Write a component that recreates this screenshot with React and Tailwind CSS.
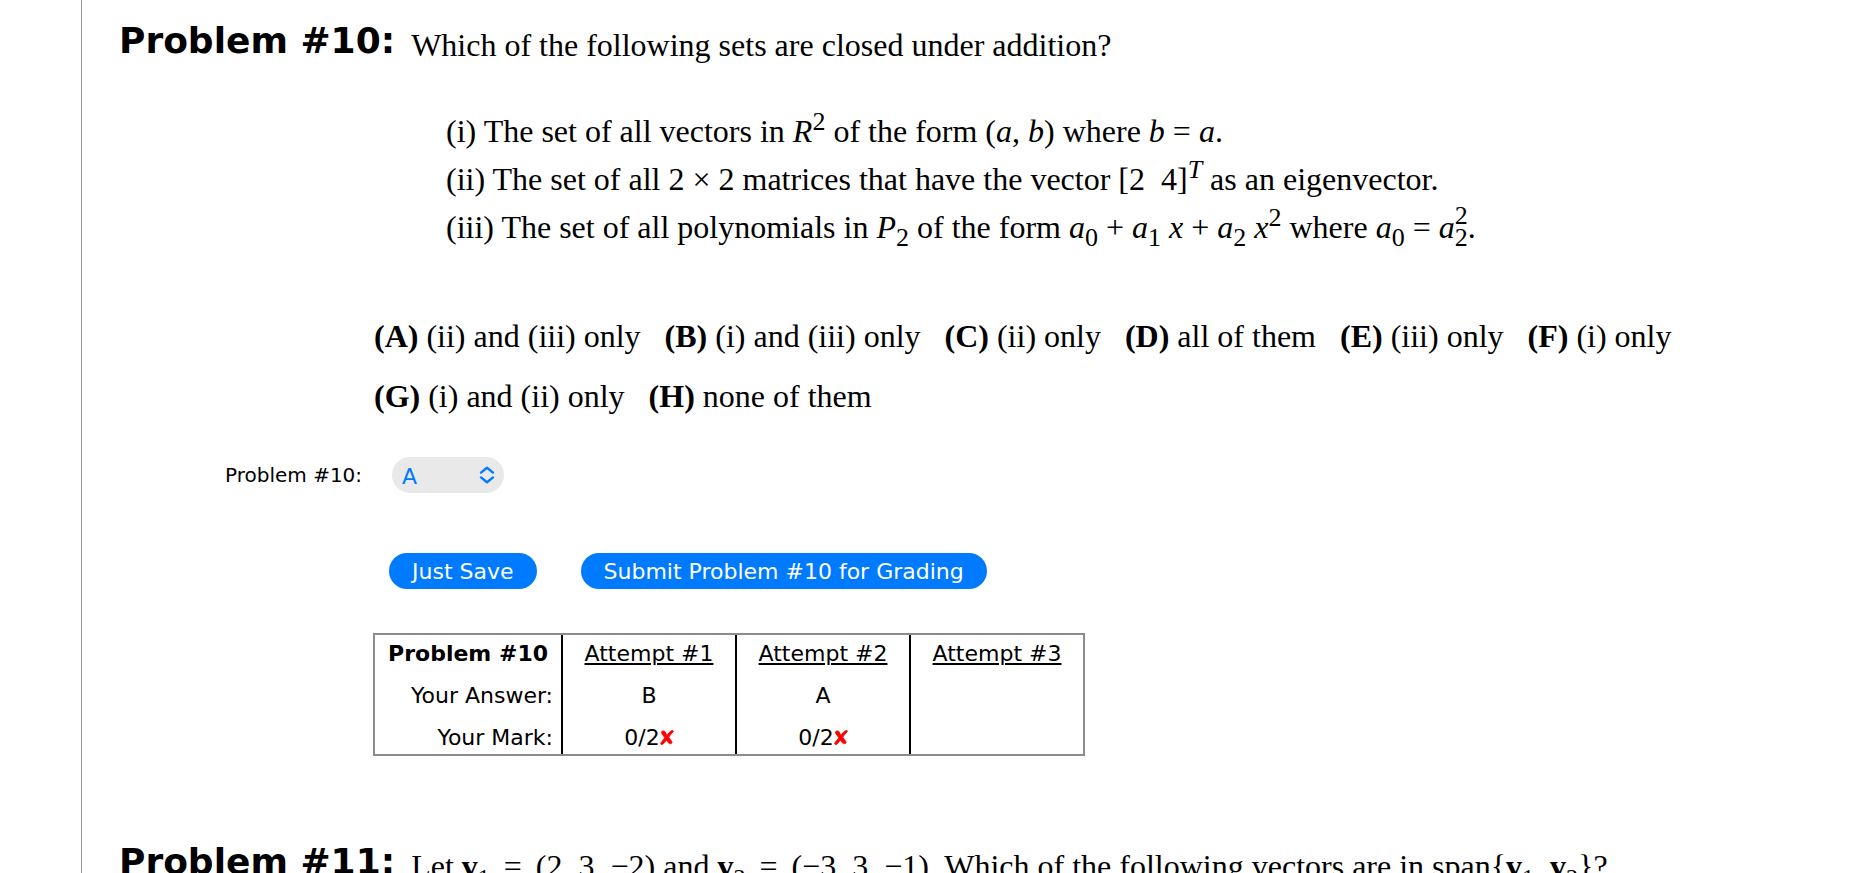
const options = [
  ['A', '(ii) and (iii) only'],
  ['B', '(i) and (iii) only'],
  ['C', '(ii) only'],
  ['D', 'all of them'],
  ['E', '(iii) only'],
  ['F', '(i) only'],
  ['G', '(i) and (ii) only'],
  ['H', 'none of them'],
];

const attempts = [
  { name: 'Attempt #1', answer: 'B', mark: '0/2' },
  { name: 'Attempt #2', answer: 'A', mark: '0/2' },
  { name: 'Attempt #3', answer: '', mark: '' },
];

const Sup = ({ children }) => (
  <sup className="relative -top-3 align-baseline text-[26px] leading-none">{children}</sup>
);

const Sub = ({ children }) => (
  <sub className="relative top-2 align-baseline text-[26px] leading-none">{children}</sub>
);

const Vector = ({ index }) => (
  <>
    <b>v</b>
    <sub className="relative top-2 align-baseline text-[24px] leading-none">{index}</sub>
  </>
);

const Equals = () => <span className="mx-[14px]">=</span>;

function ProblemHeading({ number, children }) {
  return (
    <div className="flex items-start gap-4">
      <h2 className="shrink-0 font-['DejaVu_Sans',sans-serif] text-[36px] leading-[48px] font-bold">
        Problem #{number}:
      </h2>
      <p className="leading-[56px]">{children}</p>
    </div>
  );
}

function Chevrons() {
  return (
    <svg
      className="pointer-events-none absolute top-[9px] right-[9px] h-[18px] w-4"
      viewBox="0 0 16 18"
      fill="none"
      stroke="#007aff"
      strokeWidth="2.4"
      strokeLinecap="round"
      strokeLinejoin="round"
      aria-hidden="true"
    >
      <path d="M2 6.6 8 1.8l6 4.8M2 11.4l6 4.8 6-4.8" />
    </svg>
  );
}

function Mark({ value }) {
  if (!value) return null;
  return (
    <>
      {value}
      <svg className="inline-block h-[15px] w-[14px] align-baseline" viewBox="0 0 14 15" aria-label="incorrect" role="img">
        <path
          fill="#f00"
          stroke="#f00"
          strokeWidth="0.8"
          d="M2.2 1.2C3.4.6 4.8.9 5.2 2L7 5.400C8.600 3 10.200 1 12 .6c1-.3 1.700.4 1.300 1.200C11.800 3.200 10 5 8.800 7.300l3 4.200c.5 1 .2 1.900-.8 2.100-1.200.4-2.200 0-2.700-1L6.500 10C5.400 11.400 4.300 12.900 3.200 14c-.9.800-2.400.7-2.600-.3 0-1 2.400-3.400 4.200-5.900L1.600 3.200C1.200 2.400 1.400 1.600 2.200 1.200Z"
        />
      </svg>
    </>
  );
}

export default function App() {
  return (
    <main className="h-screen overflow-hidden bg-white pl-[81px] font-['Liberation_Serif',serif] text-[32px] text-black">
      <div className="min-h-full border-l border-[#999] pt-[17px] pl-[37px]">
        <section className="h-[821px]">
          <ProblemHeading number="10">
            Which of the following sets are closed under addition?
          </ProblemHeading>

          <div className="mt-[34px] pl-[327px] leading-[48px]">
            <p>
              (i) The set of all vectors in <i>R</i>
              <Sup>2</Sup> of the form (<i>a</i>, <i>b</i>) where <i>b</i> = <i>a</i>.
            </p>
            <p>
              (ii) The set of all 2 × 2 matrices that have the vector [2&nbsp; 4]
              <Sup>
                <i>T</i>
              </Sup>{' '}
              as an eigenvector.
            </p>
            <p>
              (iii) The set of all polynomials in <i>P</i>
              <Sub>2</Sub> of the form <i>a</i>
              <Sub>0</Sub> + <i>a</i>
              <Sub>1</Sub> <i>x</i> + <i>a</i>
              <Sub>2</Sub> <i>x</i>
              <Sup>2</Sup> where <i>a</i>
              <Sub>0</Sub> = <i>a</i>
              <span className="relative inline-block">
                <Sub>2</Sub>
                <span className="absolute top-0 left-0 text-[26px] leading-none">2</span>
              </span>
              .
            </p>
          </div>

          <ul className="mt-[55px] mr-40 flex flex-wrap gap-x-6 pl-[255px] leading-[60px]">
            {options.map(([letter, text]) => (
              <li key={letter}>
                <b>({letter})</b> {text}
              </li>
            ))}
          </ul>

          <div className="font-['DejaVu_Sans',sans-serif]">
            <div className="mt-[31px] flex items-center gap-[30px] pl-[106px]">
              <label htmlFor="answer" className="text-[20px]">
                Problem #10:
              </label>
              <div className="relative">
                <select
                  id="answer"
                  defaultValue="A"
                  className="block h-9 w-28 appearance-none rounded-full bg-[#e9e9e9] pt-0.5 pl-[10px] text-[22px] text-[#007aff]"
                >
                  {options.map(([letter]) => (
                    <option key={letter}>{letter}</option>
                  ))}
                </select>
                <Chevrons />
              </div>
            </div>

            <div className="mt-[60px] flex gap-11 pl-[270px] text-[22px] leading-[34px] text-white">
              <button type="button" className="rounded-full bg-[#007aff] px-[23px] pt-0.5">
                Just Save
              </button>
              <button type="button" className="rounded-full bg-[#007aff] px-[23px] pt-0.5">
                Submit Problem #10 for Grading
              </button>
            </div>

            <table className="mt-11 ml-[254px] border-separate border-spacing-0 border-2 border-[#8c8c8c] text-[22px] leading-8">
              <thead>
                <tr>
                  <th className="w-[186px] pt-[3px] pr-[13px] text-right font-bold">Problem #10</th>
                  {attempts.map(({ name }) => (
                    <th
                      key={name}
                      className="w-[174px] border-l-2 border-black pt-[3px] font-normal underline decoration-2 underline-offset-2"
                    >
                      {name}
                    </th>
                  ))}
                </tr>
              </thead>
              <tbody>
                <tr>
                  <th className="pt-2.5 pr-2 text-right font-normal">Your Answer:</th>
                  {attempts.map(({ name, answer }) => (
                    <td key={name} className="border-l-2 border-black pt-2.5 text-center">
                      {answer}
                    </td>
                  ))}
                </tr>
                <tr>
                  <th className="pt-2.5 pr-2 text-right font-normal">Your Mark:</th>
                  {attempts.map(({ name, mark }) => (
                    <td key={name} className="border-l-2 border-black pt-2.5 text-center">
                      <Mark value={mark} />
                    </td>
                  ))}
                </tr>
              </tbody>
            </table>
          </div>
        </section>

        <section>
          <ProblemHeading number="11">
            Let <Vector index="1" />
            <Equals />
            (2, 3, −2) and <Vector index="2" />
            <Equals />
            (−3, 3, −1). Which of the following vectors are in span{'{'}
            <Vector index="1" />, <Vector index="2" />
            {'}'}?
          </ProblemHeading>
        </section>
      </div>
    </main>
  );
}
